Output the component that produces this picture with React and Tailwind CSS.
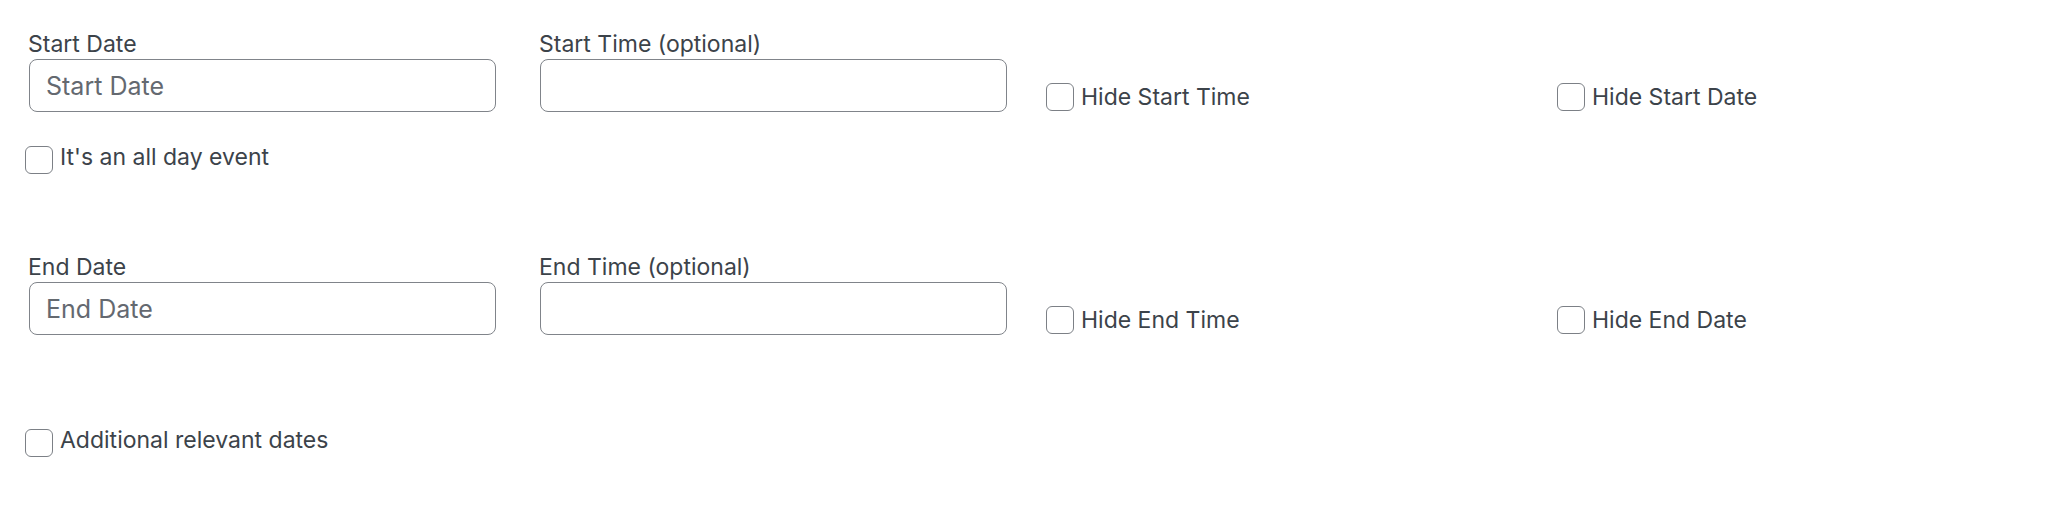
export default function App() {
    const font = { fontFamily: "Inter, 'Noto Sans', sans-serif" };

    const Field = ({ label, placeholder, pad }) => (
        <div className={"flex flex-col " + pad}>
            <label className="text-[23px] leading-[26px] text-[#3c434a]">{label}</label>
            <input
                type="text"
                placeholder={placeholder}
                className="mt-[2px] ml-px w-[467px] h-[53px] px-[16px] border border-[#80848a] rounded-[8px] bg-white text-[25px] text-[#2c3338] placeholder:text-[#646970] outline-none"
            />
        </div>
    );

    const Check = ({ label, lift }) => (
        <label className="flex items-center gap-[7px] text-[23px] text-[#3c434a] cursor-pointer">
            <input
                type="checkbox"
                className="appearance-none shrink-0 w-[28px] h-[28px] border border-[#7c8086] rounded-[6px] bg-white"
            />
            <span className={lift ? "mb-[6px] leading-[26px]" : "leading-[26px]"}>{label}</span>
        </label>
    );

    return (
        <div className="w-[2048px] h-[519px] bg-white pt-[31px]" style={font}>
            {/* start row */}
            <div className="grid grid-cols-4 items-end">
                <Field label="Start Date" placeholder="Start Date" pad="pl-[28px]" />
                <Field label="Start Time (optional)" placeholder="" pad="pl-[27px]" />
                <div className="pl-[22px] pb-[1px]">
                    <Check label="Hide Start Time" />
                </div>
                <div className="pl-[21px] pb-[1px]">
                    <Check label="Hide Start Date" />
                </div>
            </div>

            <div className="mt-[32px] pl-[25px]">
                <Check label="It's an all day event" lift />
            </div>

            {/* end row */}
            <div className="grid grid-cols-4 items-end mt-[78px]">
                <Field label="End Date" placeholder="End Date" pad="pl-[28px]" />
                <Field label="End Time (optional)" placeholder="" pad="pl-[27px]" />
                <div className="pl-[22px] pb-[1px]">
                    <Check label="Hide End Time" />
                </div>
                <div className="pl-[21px] pb-[1px]">
                    <Check label="Hide End Date" />
                </div>
            </div>

            <div className="mt-[92px] pl-[25px]">
                <Check label="Additional relevant dates" lift />
            </div>
        </div>
    );
}
